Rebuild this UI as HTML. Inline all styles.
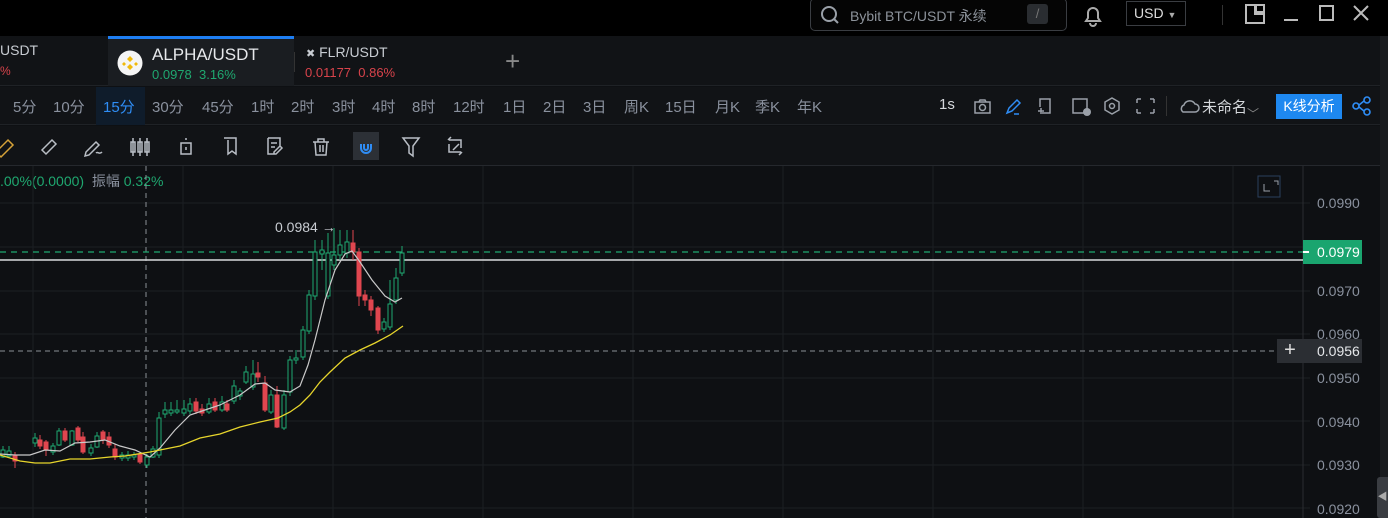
<!DOCTYPE html>
<html><head><meta charset="utf-8"><style>
*{margin:0;padding:0;box-sizing:border-box}
body{width:1388px;height:518px;background:#0e1013;overflow:hidden;position:relative;font-family:"Liberation Sans","Noto Sans CJK SC",sans-serif;color:#c8ccd2}
.a{position:absolute}
.top{left:0;top:0;width:1388px;height:36px;background:#000}
.tabs{left:0;top:36px;width:1380px;height:50px;background:#111316;border-bottom:1px solid #1f2226}
.tf{left:0;top:87px;width:1380px;height:38px;background:#111316;border-bottom:1px solid #1f2226}
.tools{left:0;top:126px;width:1380px;height:40px;background:#111316;border-bottom:1px solid #25282d}
.tf span{position:absolute;top:9px;font-size:15px;color:#8a919e}
.g{color:#1fa870}.r{color:#d8434b}
.p{left:1317px;font-size:14px;color:#8a919e;line-height:18px}
</style></head><body>
<div class="a top">
 <div class="a" style="left:810px;top:-2px;width:257px;height:33px;border:1px solid #3a3d42;border-radius:5px;background:#050505"></div>
 <svg class="a" style="left:820px;top:5px" width="20" height="20"><circle cx="9" cy="9" r="7" stroke="#9aa0a8" stroke-width="2" fill="none"/><line x1="14" y1="14" x2="18" y2="18" stroke="#9aa0a8" stroke-width="2"/></svg>
 <div class="a" style="left:850px;top:6px;font-size:14px;color:#8d939b">Bybit BTC/USDT 永续</div>
 <div class="a" style="left:1027px;top:4px;width:21px;height:20px;background:#2a2d31;border-radius:3px;color:#777;font-size:13px;text-align:center;line-height:20px">/</div>
 <svg class="a" style="left:1081px;top:3px" width="24" height="24"><path d="M5 18h14l-2-3v-5a5 5 0 0 0-10 0v5z" stroke="#aaa" stroke-width="2" fill="none"/><path d="M9 20a3 3 0 0 0 6 0" stroke="#aaa" stroke-width="2" fill="none"/></svg>
 <div class="a" style="left:1126px;top:1px;width:60px;height:25px;border:1px solid #3a3d42;font-size:14px;color:#ddd;line-height:23px;padding-left:7px">USD <span style="font-size:9px;color:#aaa">▼</span></div>
 <div class="a" style="left:1222px;top:5px;width:1px;height:20px;background:#333"></div>
 <svg class="a" style="left:1244px;top:3px" width="130" height="22"><path d="M2 2v18h18v-9h-9v-9z M12 2h8v7h-8z" stroke="#bbb" stroke-width="2" fill="none"/><line x1="40" y1="17" x2="54" y2="17" stroke="#bbb" stroke-width="2"/><rect x="76" y="3" width="13" height="14" stroke="#bbb" stroke-width="2" fill="none"/><path d="M110 3l14 14M124 3l-14 14" stroke="#bbb" stroke-width="2"/></svg>
</div>
<div class="a tabs">
 <div class="a" style="left:0;top:6px;font-size:14px;color:#c8ccd2">USDT</div>
 <div class="a r" style="left:0;top:28px;font-size:12px">%</div>
 <div class="a" style="left:108px;top:0;width:186px;height:50px;background:#1a1d21;border-top:3px solid #1e7ef2"></div>
 <svg class="a" style="left:117px;top:14px" width="26" height="26"><circle cx="13" cy="13" r="12.5" fill="#f5f5f5"/><path d="M13 6l3 3-3 3-3-3zM7 12l2 2-2 2-2-2zM19 12l2 2-2 2-2-2zM13 14l3 3-3 3-3-3z" fill="#f0b90b"/></svg>
 <div class="a" style="left:152px;top:9px;font-size:17px;color:#e6e8eb">ALPHA/USDT</div>
 <div class="a g" style="left:152px;top:31px;font-size:13px">0.0978&nbsp; 3.16%</div>
 <div class="a" style="left:294px;top:16px;width:1px;height:20px;background:#333"></div>
 <div class="a" style="left:306px;top:8px;font-size:14px;color:#c8ccd2"><span style="font-size:11px">✖</span> FLR/USDT</div>
 <div class="a r" style="left:305px;top:29px;font-size:13px">0.01177&nbsp; 0.86%</div>
 <div class="a" style="left:505px;top:10px;font-size:26px;color:#888;font-weight:300">+</div>
</div>
<div class="a" style="left:1380px;top:36px;width:8px;height:482px;background:#1a1c1f"></div>
<div class="a tf">
 <div class="a" style="left:96px;top:0;width:49px;height:38px;background:#0f1c2b"></div>
 <span style="left:13px">5分</span><span style="left:53px">10分</span><span style="left:103px;color:#2f8df5">15分</span><span style="left:152px">30分</span><span style="left:202px">45分</span><span style="left:251px">1时</span><span style="left:291px">2时</span><span style="left:332px">3时</span><span style="left:372px">4时</span><span style="left:412px">8时</span><span style="left:453px">12时</span><span style="left:503px">1日</span><span style="left:543px">2日</span><span style="left:583px">3日</span><span style="left:624px">周K</span><span style="left:665px">15日</span><span style="left:715px">月K</span><span style="left:755px">季K</span><span style="left:797px">年K</span>
 <span style="left:939px;color:#d5d8dc">1s</span>
 <svg class="a" style="left:970px;top:8px" width="190" height="22" fill="none" stroke-width="1.5"><rect x="5" y="7" width="15" height="11" stroke="#9aa0a8"/><circle cx="12.5" cy="12.5" r="3" stroke="#9aa0a8"/><path d="M9 7l1-2h5l1 2" stroke="#9aa0a8"/><path d="M37 18l2-5 8-8 3 3-8 8-5 2zM44 19h5" stroke="#2f8df5"/><path d="M72 4h8v14h-8M78 4h-8v8M68 16h6M71 13v6" stroke="#9aa0a8"/><rect x="103" y="4" width="14" height="14" stroke="#9aa0a8"/><circle cx="117" cy="17" r="4" fill="#9aa0a8"/><path d="M142 3l7 4v8l-7 4-7-4v-8z" stroke="#9aa0a8"/><circle cx="142" cy="11" r="2.5" stroke="#9aa0a8"/><path d="M167 4h4M167 4v4M184 4h-4M184 4v4M167 18h4M167 18v-4M184 18h-4M184 18v-4" stroke="#9aa0a8"/></svg>
 <div class="a" style="left:1166px;top:9px;width:1px;height:20px;background:#333"></div>
 <svg class="a" style="left:1178px;top:10px" width="22" height="18"><path d="M5 15h12a4 4 0 0 0 0-8 6 6 0 0 0-11 1 4 4 0 0 0-1 7z" stroke="#9aa0a8" stroke-width="1.5" fill="none"/></svg>
 <span style="left:1202px;color:#d5d8dc">未命名 <span style="color:#888;font-size:12px">﹀</span></span>
 <div class="a" style="left:1276px;top:7px;width:66px;height:25px;background:#1e88f0;color:#fff;font-size:14px;text-align:center;line-height:25px">K线分析</div>
 <svg class="a" style="left:1352px;top:9px" width="20" height="20"><circle cx="15" cy="4" r="3" stroke="#2f8df5" stroke-width="1.6" fill="none"/><circle cx="4" cy="10" r="3" stroke="#2f8df5" stroke-width="1.6" fill="none"/><circle cx="15" cy="16" r="3" stroke="#2f8df5" stroke-width="1.6" fill="none"/><path d="M7 9l5-4M7 11l5 4" stroke="#2f8df5" stroke-width="1.6"/></svg>
</div>
<div class="a tools">
 <div class="a" style="left:353px;top:6px;width:26px;height:28px;background:#2c3036"></div>
 <svg class="a" style="left:0;top:8px" width="480" height="26" fill="none" stroke="#b9bec5" stroke-width="1.5"><path d="M-4 18l12-12 5 5-12 12z" stroke="#d6a238"/><path d="M42 16l10-10 4 4-10 10z"/><path d="M86 18l10-10 3 3-10 10-4 1zM96 19c2-2 3 2 6-1"/><path d="M133 4v18M140 4v18M147 4v18M131 8h4v10h-4zM138 8h4v10h-4zM145 8h4v10h-4z"/><path d="M181 9h10v11h-10zM185 5h2M186 13v3"/><path d="M224 4h12v16l-4-3-4 3V6"/><path d="M268 4h12v8M268 4v16h7M274 18l6-6 2 2-6 6h-2z M271 9h6M271 13h4"/><path d="M313 8h16M318 8V5h6v3M315 8l1 13h10l1-13M320 11v7M323 11v7"/><path d="M361 10v4a5 5 0 0 0 10 0v-4M364 10v4a2 2 0 0 0 4 0v-4" stroke="#2f8df5" stroke-width="2"/><path d="M403 4h16l-6 8v10l-4-3v-7z"/><path d="M449 6h12v8M461 18h-12v-8M453 16l6-6M448 6l3-3M462 18l-3 3"/></svg>
</div>
<div class="a" style="left:0;top:171px;font-size:14px"><span class="g">.00%(0.0000)</span>&nbsp;&nbsp;<span style="color:#8a919e">振幅</span> <span class="g">0.32%</span></div>
<svg class="a" style="left:0;top:166px" width="1380" height="352">
 <g stroke="#1c1f23" stroke-width="1">
  <path d="M33 0v352M183 0v352M333 0v352M483 0v352M633 0v352M783 0v352M933 0v352M1083 0v352M1233 0v352"/>
  <path d="M0 37h1310M0 81h1310M0 125h1310M0 168h1310M0 212h1310M0 255h1310M0 299h1310M0 342h1310"/>
 </g>
 <line x1="1303" y1="0" x2="1303" y2="352" stroke="#2a2d31"/>
 <line x1="146" y1="0" x2="146" y2="352" stroke="#8a8f96" stroke-dasharray="5,4"/>
 <line x1="0" y1="185" x2="1280" y2="185" stroke="#8a8f96" stroke-dasharray="5,4"/>
 <line x1="0" y1="86" x2="1303" y2="86" stroke="#1fa870" stroke-dasharray="6,5" stroke-width="1.3"/>
 <line x1="0" y1="94" x2="1303" y2="94" stroke="#d9dbdd" stroke-width="1.5"/>
 <rect x="1258" y="10" width="22" height="21" stroke="#2b3f5c" fill="none"/>
 <path d="M1264 18v7h6M1274 15h4v4" stroke="#9aa0a8" fill="none"/>
</svg>
<svg class="a" style="left:0;top:0" width="1303" height="518">
<g stroke-width="1">
<g stroke="#1fa870" fill="#0e1013">
<path d="M3 446v12M9 446v12M35 433v14M53 443v12M59 428v18M72 430v16M91 444v12M97 432v16M122 452v9M128 451v10M134 452v8M147 454v14M153 446v12M159 412v46M165 402v16M171 402v14M177 400v14M184 400v16M190 398v16M209 398v16M222 396v16M234 380v24M240 388v12M246 366v18M253 360v30M271 390v24M284 390v40M290 356v40M296 350v14M303 326v34M309 290v44M315 240v60M322 240v30M328 233v66M334 228v42M340 230v30M347 230v28M384 318v14M390 280v50M396 268v36M402 246v30"/>
<rect x="1" y="450" width="4" height="7"/><rect x="7" y="451" width="4" height="5"/><rect x="33" y="438" width="4" height="5"/><rect x="51" y="446" width="4" height="6"/><rect x="57" y="431" width="4" height="14"/><rect x="70" y="431" width="4" height="14"/><rect x="89" y="448" width="4" height="5"/><rect x="95" y="436" width="4" height="11"/><rect x="120" y="455" width="4" height="3"/><rect x="126" y="455" width="4" height="3"/><rect x="132" y="455" width="4" height="2"/><rect x="145" y="457" width="4" height="8"/><rect x="151" y="449" width="4" height="8"/><rect x="157" y="418" width="4" height="37"/><rect x="163" y="410" width="4" height="4"/><rect x="169" y="410" width="4" height="3"/><rect x="175" y="410" width="4" height="2"/><rect x="182" y="409" width="4" height="4"/><rect x="188" y="404" width="4" height="7"/><rect x="207" y="404" width="4" height="8"/><rect x="220" y="402" width="4" height="8"/><rect x="232" y="386" width="4" height="15"/><rect x="238" y="391" width="4" height="5"/><rect x="244" y="372" width="4" height="10"/><rect x="251" y="374" width="4" height="13"/><rect x="269" y="395" width="4" height="17"/><rect x="282" y="395" width="4" height="33"/><rect x="288" y="360" width="4" height="32"/><rect x="294" y="358" width="4" height="2"/><rect x="301" y="330" width="4" height="27"/><rect x="307" y="295" width="4" height="36"/><rect x="313" y="252" width="4" height="44"/><rect x="320" y="250" width="4" height="4"/><rect x="326" y="253" width="4" height="43"/><rect x="332" y="255" width="4" height="10"/><rect x="338" y="245" width="4" height="10"/><rect x="345" y="242" width="4" height="11"/><rect x="382" y="322" width="4" height="7"/><rect x="388" y="304" width="4" height="23"/><rect x="394" y="278" width="4" height="22"/><rect x="400" y="253" width="4" height="20"/>
</g>
<g stroke="#e0464f" fill="#e0464f">
<path d="M15 452v16M40 435v14M46 440v16M65 428v14M78 426v16M83 432v22M103 430v14M109 432v16M115 444v16M140 452v12M196 398v16M202 404v12M215 398v14M227 400v12M258 362v20M265 376v36M277 386v42M353 230v30M359 248v58M365 290v16M371 296v20M378 306v28"/>
<rect x="13" y="455" width="4" height="6"/><rect x="38" y="440" width="4" height="6"/><rect x="44" y="442" width="4" height="8"/><rect x="63" y="431" width="4" height="9"/><rect x="76" y="428" width="4" height="12"/><rect x="81" y="437" width="4" height="15"/><rect x="101" y="432" width="4" height="8"/><rect x="107" y="437" width="4" height="8"/><rect x="113" y="449" width="4" height="8"/><rect x="138" y="454" width="4" height="8"/><rect x="194" y="402" width="4" height="9"/><rect x="200" y="409" width="4" height="4"/><rect x="213" y="402" width="4" height="8"/><rect x="225" y="404" width="4" height="6"/><rect x="256" y="373" width="4" height="4"/><rect x="263" y="383" width="4" height="27"/><rect x="275" y="395" width="4" height="32"/><rect x="351" y="243" width="4" height="9"/><rect x="357" y="252" width="4" height="44"/><rect x="363" y="295" width="4" height="5"/><rect x="369" y="300" width="4" height="10"/><rect x="376" y="308" width="4" height="22"/>
</g>
</g>
<path d="M0 454L15 455L30 455L45 450L60 451L75 443L90 442L105 440L120 446L135 450L150 457L160 448L175 430L190 415L205 410L220 405L240 395L255 384L265 383L275 390L290 392L300 386L308 365L315 340L325 300L335 270L345 254L352 251L360 262L372 280L385 296L395 302L402 298" stroke="#c9c9c9" stroke-width="1.2" fill="none"/>
<path d="M0 455L20 461L35 463L50 463L70 459L90 459L110 457L125 456L150 452L165 449L180 446L200 438L220 434L240 427L260 422L278 418L290 412L300 405L310 395L320 382L330 372L345 358L360 350L375 343L390 335L403 326" stroke="#e7d52c" stroke-width="1.3" fill="none"/>
<text x="275" y="232" font-size="14" fill="#c8ccd2" font-family="Liberation Sans">0.0984 →</text>
</svg>
<div class="a" style="left:1303px;top:240px;width:59px;height:24px;background:#1aa56f"></div>
<div class="a" style="left:1303px;top:251px;width:6px;height:1.5px;background:#fff"></div>
<div class="a" style="left:1277px;top:339px;width:26px;height:24px;background:#2b2e33;color:#ddd;font-size:20px;text-align:center;line-height:22px">+</div>
<div class="a" style="left:1303px;top:339px;width:59px;height:24px;background:#2b2e33"></div>
<div class="a p" style="top:194px">0.0990</div>
<div class="a p" style="top:243px;color:#fff">0.0979</div>
<div class="a p" style="top:282px">0.0970</div>
<div class="a p" style="top:325px">0.0960</div>
<div class="a p" style="top:342px;color:#e6e8eb">0.0956</div>
<div class="a p" style="top:369px">0.0950</div>
<div class="a p" style="top:413px">0.0940</div>
<div class="a p" style="top:456px">0.0930</div>
<div class="a p" style="top:500px">0.0920</div>
<div class="a" style="left:1377px;top:477px;width:11px;height:41px;background:#3a3d42;border-radius:3px 0 0 3px;color:#aaa;font-size:10px;line-height:41px;text-align:center">◀</div>
</body></html>
